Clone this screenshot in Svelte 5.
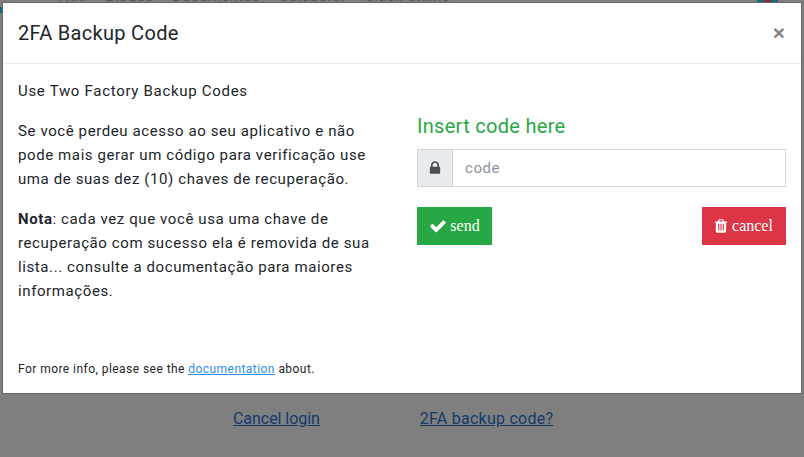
<script>
  const navItems = ['Wiki', 'Blogue', 'Documentos', 'Colaborar', 'Slack Online'];
</script>

<div class="page">
  <nav class="topnav">
    <span class="logo"></span>
    {#each navItems as item}
      <span class="nav-item">{item}</span>
    {/each}
    <span class="flags"><i class="teal"></i><i class="red"></i><i class="teal"></i></span>
  </nav>

  <div class="login-links">
    <a href="#cancel">Cancel login</a>
    <a href="#backup">2FA backup code?</a>
  </div>

  <div class="modal">
    <header class="modal-header">
      <h5>2FA Backup Code</h5>
      <button class="close" type="button">×</button>
    </header>

    <div class="modal-body">
      <div class="cols">
        <div class="info">
          <p class="lead">Use Two Factory Backup Codes</p>
          <p>Se você perdeu acesso ao seu aplicativo e não pode mais gerar um código para verificação use uma de suas dez (10) chaves de recuperação.</p>
          <p><strong>Nota</strong>: cada vez que você usa uma chave de recuperação com sucesso ela é removida de sua lista... consulte a documentação para maiores informações.</p>
        </div>

        <form class="code-form">
          <h4>Insert code here</h4>
          <div class="input-group">
            <span class="addon">
              <svg viewBox="0 0 1792 1792" width="16" height="16"><path fill="currentColor" d="M640 768h512v-192q0-106-75-181t-181-75-181 75-75 181v192zm832 96v576q0 40-28 68t-68 28h-960q-40 0-68-28t-28-68v-576q0-40 28-68t68-28h32v-192q0-184 132-316t316-132 316 132 132 316v192h32q40 0 68 28t28 68z"/></svg>
            </span>
            <input type="text" placeholder="code" />
          </div>
          <div class="actions">
            <button class="btn send" type="button">
              <svg viewBox="0 0 1792 1792" width="18" height="18"><path fill="currentColor" d="M1671 566q0 40-28 68l-724 724-136 136q-28 28-68 28t-68-28l-136-136-362-362q-28-28-28-68t28-68l136-136q28-28 68-28t68 28l294 295 656-657q28-28 68-28t68 28l136 136q28 28 28 68z"/></svg>
              send
            </button>
            <button class="btn cancel" type="button">
              <svg viewBox="0 0 1792 1792" width="16" height="16"><path fill="currentColor" d="M704 1376v-704q0-14-9-23t-23-9h-64q-14 0-23 9t-9 23v704q0 14 9 23t23 9h64q14 0 23-9t9-23zm256 0v-704q0-14-9-23t-23-9h-64q-14 0-23 9t-9 23v704q0 14 9 23t23 9h64q14 0 23-9t9-23zm256 0v-704q0-14-9-23t-23-9h-64q-14 0-23 9t-9 23v704q0 14 9 23t23 9h64q14 0 23-9t9-23zm-544-992h448l-48-117q-7-9-17-11h-317q-10 2-17 11zm928 32v64q0 14-9 23t-23 9h-96v948q0 83-47 143.5t-113 60.5h-832q-66 0-113-58.5t-47-141.5v-952h-96q-14 0-23-9t-9-23v-64q0-14 9-23t23-9h309l70-167q15-37 54-63t79-26h320q40 0 79 26t54 63l70 167h309q14 0 23 9t9 23z"/></svg>
              cancel
            </button>
          </div>
        </form>
      </div>

      <small class="more">For more info, please see the <a href="#docs">documentation</a> about.</small>
    </div>
  </div>
</div>

<style>
  :global(body) {
    margin: 0;
    background: #7f7f7f;
  }

  .page {
    position: relative;
    height: 457px;
    overflow: hidden;
    font-family: Roboto, "Noto Sans", sans-serif;
    color: #212529;
  }

  .topnav {
    display: flex;
    align-items: flex-end;
    gap: 19px;
    height: 3px;
    padding-left: 57px;
    font-size: 15.5px;
    color: #4f565c;
    overflow: hidden;
  }

  .nav-item {
    flex: none;
    line-height: 16px;
    margin-bottom: -1px;
  }

  .logo {
    position: absolute;
    left: 0;
    top: 7px;
    width: 2px;
    height: 6px;
    background: #0f6a80;
  }

  .flags {
    position: absolute;
    left: 757px;
    top: 0;
    display: flex;
    height: 3px;
  }

  .flags i {
    display: block;
    width: 7px;
  }

  .flags .teal {
    background: #12697c;
  }

  .flags .red {
    background: #8a2c2c;
  }

  .login-links {
    display: flex;
    gap: 100px;
    padding: 406px 0 0 233px;
    font-size: 16px;
  }

  .login-links a {
    color: #123a6b;
    letter-spacing: 0.25px;
  }

  .login-links a:first-child {
    letter-spacing: -0.05px;
  }

  .modal {
    position: absolute;
    left: 2px;
    top: 2px;
    width: 798px;
    height: 390px;
    display: flex;
    flex-direction: column;
    background: #fff;
    border: 1px solid #666;
  }

  .modal-header {
    display: flex;
    justify-content: space-between;
    align-items: center;
    height: 60px;
    padding: 0 15px 0 15px;
    border-bottom: 1px solid #e9ecef;
  }

  h5 {
    margin: 0;
    font-size: 20px;
    font-weight: 400;
    letter-spacing: 0.3px;
  }

  .close {
    border: 0;
    padding: 0 1px 2px 0;
    background: none;
    font-family: "Liberation Sans", sans-serif;
    font-size: 21px;
    font-weight: 700;
    line-height: 1;
    color: #848484;
  }

  .modal-body {
    flex: 1;
    display: flex;
    flex-direction: column;
    justify-content: space-between;
    padding: 15px;
  }

  .cols {
    display: grid;
    grid-template-columns: 1fr 1fr;
    gap: 30px;
  }

  .info p {
    margin: 0 0 16px;
    font-size: 15px;
    line-height: 24px;
    letter-spacing: 0.6px;
  }

  .info .lead {
    letter-spacing: 0.7px;
  }

  .code-form h4 {
    margin: 35px 0 11px;
    font-size: 20px;
    font-weight: 400;
    line-height: 24px;
    letter-spacing: 0.3px;
    color: #28a745;
  }

  .input-group {
    display: flex;
    height: 38px;
    box-sizing: border-box;
    border: 1px solid #d4d7da;
  }

  .addon {
    display: flex;
    align-items: center;
    justify-content: center;
    width: 34px;
    background: #e9ecef;
    border-right: 1px solid #ced4da;
    color: #495057;
  }

  input {
    flex: 1;
    min-width: 0;
    border: 0;
    outline: 0;
    padding: 0 12px;
    font: inherit;
    font-size: 15px;
    letter-spacing: 0.55px;
    color: #495057;
  }

  input::placeholder {
    color: #8b949c;
    opacity: 1;
  }

  .actions {
    display: flex;
    justify-content: space-between;
    margin-top: 20px;
  }

  .btn {
    display: flex;
    align-items: center;
    justify-content: center;
    gap: 3px;
    height: 38px;
    border: 0;
    padding: 0;
    color: #fff;
    font-family: "Liberation Serif", serif;
    font-size: 16px;
  }

  .send {
    width: 75px;
    background: #28a745;
  }

  .cancel {
    width: 84px;
    padding-right: 2px;
    background: #dc3545;
  }

  .more {
    font-size: 12px;
    letter-spacing: 0.45px;
    line-height: 18px;
  }

  .more a {
    color: #2e8bf0;
  }
</style>
